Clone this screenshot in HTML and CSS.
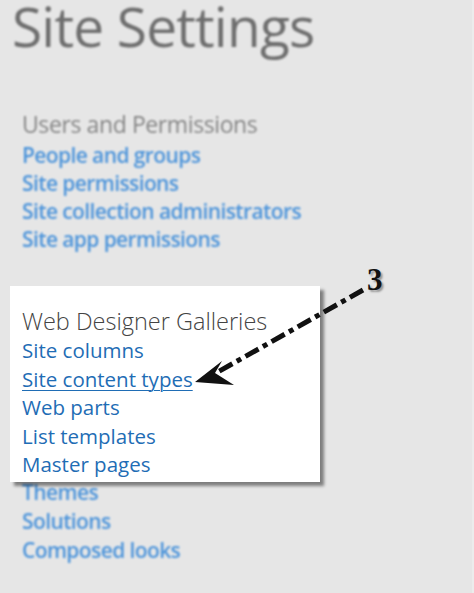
FILE: index.html
```html
<!DOCTYPE html>
<html lang="en">
<head>
  <meta charset="UTF-8">
  <meta name="viewport" content="width=device-width, initial-scale=1.0">
  <title>Site Settings</title>
  <link rel="stylesheet" href="styles.css">
</head>
<body>
  <div class="page">
    <h1 class="title">Site Settings</h1>

    <div class="group faded">
      <h3>Users and Permissions</h3>
      <a href="#">People and groups</a>
      <a href="#">Site permissions</a>
      <a href="#">Site collection administrators</a>
      <a href="#">Site app permissions</a>
    </div>

    <div class="group callout">
      <h3>Web Designer Galleries</h3>
      <a href="#">Site columns</a>
      <a href="#" class="current">Site content types</a>
      <a href="#">Web parts</a>
      <a href="#">List templates</a>
      <a href="#">Master pages</a>
    </div>

    <div class="group faded rest">
      <a href="#">Themes</a>
      <a href="#">Solutions</a>
      <a href="#">Composed looks</a>
    </div>

    <!-- step marker drawn over the page -->
    <span class="step">3</span>
    <svg class="pointer" viewBox="0 0 474 593" width="474" height="593">
      <line x1="363" y1="290" x2="216" y2="373" stroke="#111" stroke-width="5" stroke-dasharray="15 5 5 5"/>
      <polygon points="195,382 222,361 215,373 234,385" fill="#111"/>
    </svg>
  </div>
</body>
</html>
```

FILE: styles.css
```css
body {
  margin: 0;
  background: #e6e6e6;
  font-family: "Open Sans", "Noto Sans", sans-serif;
}
.page {
  position: relative;
  width: 474px;
  height: 593px;
  overflow: hidden;
  border-right: 2px solid #ececec;
  box-sizing: border-box;
}
.title {
  margin: 0 0 0 12px;
  font-size: 55px;
  font-weight: 400;
  line-height: 52px;
  color: #6e6e6e;
  letter-spacing: -0.8px;
  filter: blur(1px);
}
.group {
  display: flex;
  flex-direction: column;
  align-items: flex-start;
  padding-left: 22px;
}
.group h3 {
  margin: 0;
  font-weight: 400;
  font-size: 18px;
  line-height: 28px;
  color: #6a6a6a;
}
.group a {
  font-size: 17px;
  line-height: 28px;
  color: #2b7fd4;
  text-decoration: none;
}
.faded {
  filter: blur(1.3px);
  opacity: 0.9;
}
.faded h3 {
  margin-bottom: 3px;
  font-size: 23px;
  letter-spacing: -0.4px;
  color: #7a7a7a;
}
.faded a {
  font-size: 21px;
  font-weight: 600;
  letter-spacing: -0.6px;
  color: #3b8bd9;
}
.group:first-of-type {
  margin-top: 58px;
}
.callout {
  position: relative;
  z-index: 1;
  width: 298px;
  margin: 33px 0 -4px 10px;
  padding: 20px 0 3px 12px;
  background: #fff;
  box-shadow: 4px 4px 3px rgba(0, 0, 0, 0.45);
}
.callout h3 {
  font-size: 23.5px;
  font-weight: 300;
  line-height: 30px;
  color: #444;
}
.callout a {
  font-size: 20.5px;
  line-height: 28.5px;
  color: #1f6db5;
}
.callout a.current {
  text-decoration: underline;
  text-underline-offset: 3px;
  text-decoration-thickness: 1px;
}
.rest a {
  line-height: 29px;
}
.step {
  position: absolute;
  left: 367px;
  top: 262px;
  font-family: "Liberation Serif", serif;
  font-weight: 700;
  font-size: 31px;
  color: #111;
  text-shadow: 2px 2px 2px rgba(0, 0, 0, 0.35);
}
.pointer {
  position: absolute;
  left: 0;
  top: 0;
  z-index: 2;
  pointer-events: none;
}
```
